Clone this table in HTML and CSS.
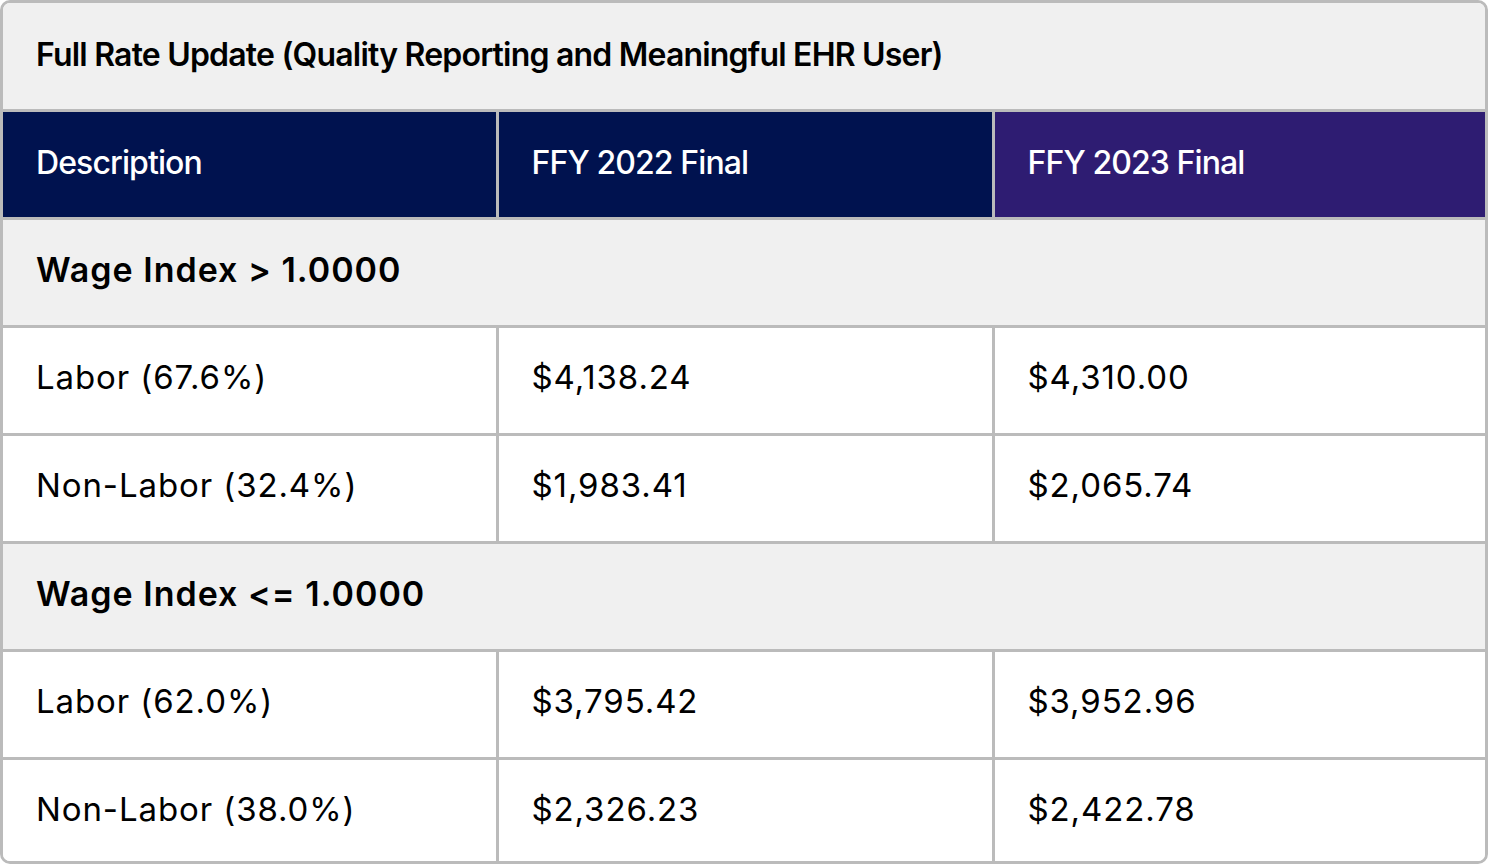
FILE: index.html
```html
<!DOCTYPE html>
<html lang="en">
<head>
<meta charset="utf-8">
<title>Full Rate Update</title>
<link rel="stylesheet" href="styles.css">
</head>
<body>
<div class="wrap">
<table class="rates">
  <colgroup>
    <col class="col-desc">
    <col class="col-2022">
    <col class="col-2023">
  </colgroup>
  <thead>
    <tr class="caption-row"><th colspan="3">Full Rate Update (Quality Reporting and Meaningful EHR User)</th></tr>
    <tr class="head-row">
      <th class="c1">Description</th>
      <th class="c2">FFY 2022 Final</th>
      <th class="c3">FFY 2023 Final</th>
    </tr>
  </thead>
  <tbody>
    <tr class="group"><td colspan="3">Wage Index &gt; 1.0000</td></tr>
    <tr><td>Labor (67.6%)</td><td>$4,138.24</td><td>$4,310.00</td></tr>
    <tr><td>Non-Labor (32.4%)</td><td>$1,983.41</td><td>$2,065.74</td></tr>
    <tr class="group"><td colspan="3">Wage Index &lt;= 1.0000</td></tr>
    <tr><td>Labor (62.0%)</td><td>$3,795.42</td><td>$3,952.96</td></tr>
    <tr class="last"><td>Non-Labor (38.0%)</td><td>$2,326.23</td><td>$2,422.78</td></tr>
  </tbody>
</table>
</div>
</body>
</html>
```
FILE: styles.css
```css
html, body {
  margin: 0;
  padding: 0;
  background: #ffffff;
}
.wrap {
  width: 1488px;
  height: 864px;
  box-sizing: border-box;
  border: 3px solid #bbbbbb;
  border-radius: 10px;
  overflow: hidden;
}
.rates {
  width: 100%;
  border-collapse: collapse;
  table-layout: fixed;
  font-family: Inter, "Noto Sans", sans-serif;
  color: #000;
}
.col-desc { width: 494px; }
.col-2022 { width: 496px; }
.col-2023 { width: 492px; }
.rates tr { height: 108px; }
.rates tr.caption-row { height: 107px; }
.rates tr.last { height: 103px; }
.rates th, .rates td {
  padding: 0 0 4px 33px;
  box-sizing: border-box;
  text-align: left;
  vertical-align: middle;
  border: 3px solid #bbbbbb;
}
.rates tr > :first-child { border-left: none; }
.rates tr > :last-child { border-right: none; }
.caption-row th {
  border-top: none;
  background: #f0f0f0;
  font-weight: 600;
  font-size: 32px;
  letter-spacing: -0.8px;
  color: #000;
  padding-bottom: 2px;
}
.head-row th {
  font-weight: 500;
  font-size: 32px;
  letter-spacing: -0.9px;
  color: #ffffff;
}
.head-row .c1, .head-row .c2 { background: #00124f; }
.head-row .c3 { background: #2e1c72; }
.rates td {
  font-size: 33px;
  font-weight: 400;
  letter-spacing: 0.9px;
  background: #ffffff;
  padding-bottom: 6px;
}
.rates .group td {
  background: #f0f0f0;
  font-size: 34px;
  font-weight: 600;
  letter-spacing: 1px;
}
.rates .last td { border-bottom: none; padding-bottom: 2px; }
```
